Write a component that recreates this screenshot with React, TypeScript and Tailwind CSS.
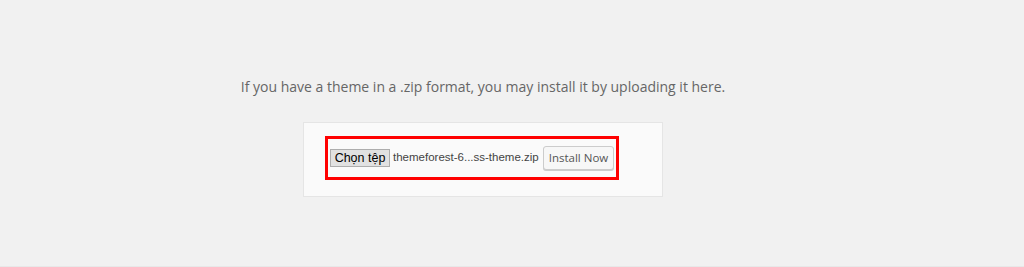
export default function App() {
  return (
    <div className="h-[267px] w-full bg-[#f1f1f1] font-['Open_Sans','Liberation_Sans',sans-serif] flex flex-col items-center pr-[58px] border-b border-[#e8e8e8]">
      <p className="mt-[77px] text-[14px] leading-5 text-[#666] whitespace-nowrap">
        If you have a theme in a .zip format, you may install it by uploading it here.
      </p>

      <div className="mt-[25px] w-[360px] h-[75px] bg-[#fafafa] border border-[#e5e5e5] pl-[21px] pt-[13px]">
        <div className="w-[294px] h-[44px] border-[3px] border-[#ff0000] flex items-center px-[2px]">
          <button className="shrink-0 whitespace-nowrap h-[18px] w-[60px] bg-[#e1e1e1] border border-[#adadad] text-[12.5px] leading-none text-black font-['Liberation_Sans',sans-serif] flex items-center justify-center">
            Chọn tệp
          </button>
          <span className="ml-[3px] text-[11.5px] text-[#444] whitespace-nowrap font-['Liberation_Sans',sans-serif]">
            themeforest-6...ss-theme.zip
          </span>
          <button className="shrink-0 whitespace-nowrap ml-auto h-[24px] w-[71px] rounded-[3px] bg-[#f7f7f7] border border-[#ccc] shadow-[0_1px_0_#ccc] text-[11.5px] text-[#555] flex items-center justify-center">
            Install Now
          </button>
        </div>
      </div>
    </div>
  );
}
